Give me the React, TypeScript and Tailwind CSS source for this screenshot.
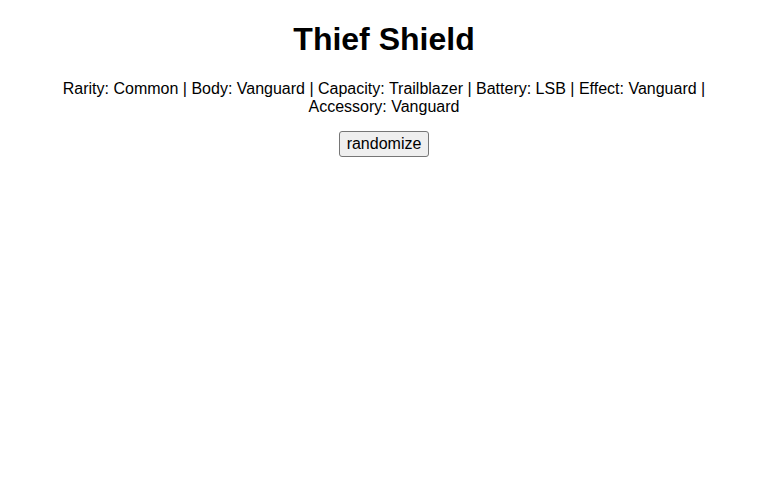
import React, { useState } from "react";

const options = ["Vanguard", "Trailblazer", "LSB", "Common"];

export default function App() {
	const [stats] = useState({
		rarity: "Common",
		body: "Vanguard",
		capacity: "Trailblazer",
		battery: "LSB",
		effect: "Vanguard",
		accessory: "Vanguard"
	});
	return (
		<div className="bg-white min-h-[480px] text-black text-center px-2" style={{ fontFamily: '"Liberation Sans", Arial, sans-serif' }}>
			<h1 className="text-[32px] font-bold leading-[37px] pt-[21px] mb-[22px]">Thief Shield</h1>
			<p className="text-base leading-[18px] max-w-[700px] mx-auto mb-[15px]">
				Rarity: {stats.rarity} | Body: {stats.body} | Capacity: {stats.capacity} | Battery: {stats.battery} | Effect: {stats.effect} | Accessory: {stats.accessory}
			</p>
			<button
				className="text-base leading-[18px] bg-[#efefef] border border-[#767676] rounded-[3px] px-[7px] py-[3px] text-black"
				onClick={() => console.log(options)}
			>
				randomize
			</button>
		</div>
	);
}
